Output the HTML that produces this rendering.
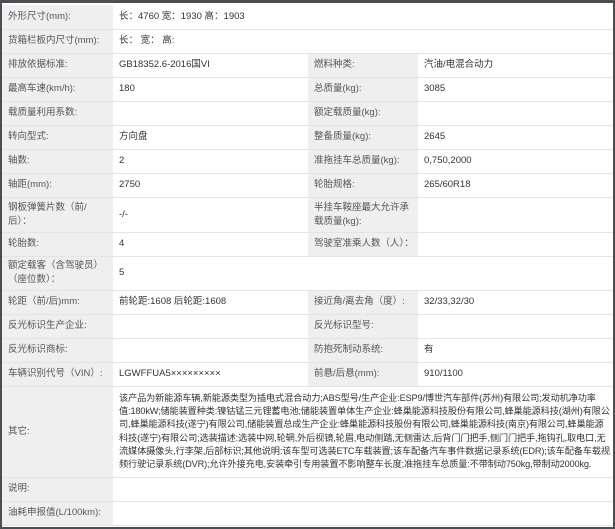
<!DOCTYPE html>
<html><head><meta charset="utf-8"><style>
html,body{margin:0;padding:0;background:#fff;}
body{width:615px;height:528px;overflow:hidden;position:relative;font-family:"Liberation Sans","Noto Sans CJK SC",sans-serif;font-size:9.5px;color:#444;}
.frame{position:absolute;left:0;top:0;width:611px;height:524px;border:2px solid #4a4f55;border-top:3px solid #4a4f55;box-sizing:content-box;}
table{border-collapse:collapse;table-layout:fixed;width:611px;position:absolute;left:0;top:2px;}
td{border-bottom:1px solid #e4e4e4;padding:0 0 0 6px;vertical-align:middle;line-height:14px;overflow:hidden;}
td.l{background:#efefef;color:#555;}
td.v{background:#fff;color:#333;}
</style></head><body>
<div class="frame">
<table>
<colgroup><col style="width:111px"><col style="width:195px"><col style="width:110px"><col style="width:195px"></colgroup>
<tr style="height:24px"><td class="l">外形尺寸(mm):</td><td class="v" colspan="3">长：4760 宽：1930 高：1903</td></tr>
<tr style="height:24px"><td class="l">货箱栏板内尺寸(mm):</td><td class="v" colspan="3">长： 宽： 高:</td></tr>
<tr style="height:24px"><td class="l">排放依据标准:</td><td class="v">GB18352.6-2016国VI</td><td class="l">燃料种类:</td><td class="v">汽油/电混合动力</td></tr>
<tr style="height:24px"><td class="l">最高车速(km/h):</td><td class="v">180</td><td class="l">总质量(kg):</td><td class="v">3085</td></tr>
<tr style="height:24px"><td class="l">载质量利用系数:</td><td class="v"></td><td class="l">额定载质量(kg):</td><td class="v"></td></tr>
<tr style="height:24px"><td class="l">转向型式:</td><td class="v">方向盘</td><td class="l">整备质量(kg):</td><td class="v">2645</td></tr>
<tr style="height:24px"><td class="l">轴数:</td><td class="v">2</td><td class="l">准拖挂车总质量(kg):</td><td class="v">0,750,2000</td></tr>
<tr style="height:24px"><td class="l">轴距(mm):</td><td class="v">2750</td><td class="l">轮胎规格:</td><td class="v">265/60R18</td></tr>
<tr style="height:35px"><td class="l">钢板弹簧片数（前/<br>后）：</td><td class="v">-/-</td><td class="l">半挂车鞍座最大允许承载质量(kg):</td><td class="v"></td></tr>
<tr style="height:24px"><td class="l">轮胎数:</td><td class="v">4</td><td class="l">驾驶室准乘人数（人）：</td><td class="v"></td></tr>
<tr style="height:34px"><td class="l">额定载客（含驾驶员）<br>（座位数）：</td><td class="v" colspan="3">5</td></tr>
<tr style="height:24px"><td class="l">轮距（前/后)mm:</td><td class="v">前轮距:1608 后轮距:1608</td><td class="l">接近角/离去角（度）:</td><td class="v">32/33,32/30</td></tr>
<tr style="height:24px"><td class="l">反光标识生产企业:</td><td class="v"></td><td class="l">反光标识型号:</td><td class="v"></td></tr>
<tr style="height:24px"><td class="l">反光标识商标:</td><td class="v"></td><td class="l">防抱死制动系统:</td><td class="v">有</td></tr>
<tr style="height:24px"><td class="l">车辆识别代号（VIN）:</td><td class="v">LGWFFUA5×××××××××</td><td class="l">前悬/后悬(mm):</td><td class="v">910/1100</td></tr>
<tr style="height:91px"><td class="l">其它:</td><td class="v" colspan="3" style="line-height:13.3px;padding-right:2px;font-size:9.2px;letter-spacing:-0.15px;">该产品为新能源车辆,新能源类型为插电式混合动力;ABS型号/生产企业:ESP9/博世汽车部件(苏州)有限公司;发动机净功率值:180kW;储能装置种类:镍钴锰三元锂蓄电池;储能装置单体生产企业:蜂巢能源科技股份有限公司,蜂巢能源科技(湖州)有限公司,蜂巢能源科技(遂宁)有限公司,储能装置总成生产企业:蜂巢能源科技股份有限公司,蜂巢能源科技(南京)有限公司,蜂巢能源科技(遂宁)有限公司;选装描述:选装中网,轮辋,外后视镜,轮眉,电动侧踏,无侧雷达,后背门门把手,侧门门把手,拖钩孔,取电口,无流媒体摄像头,行李架,后部标识;其他说明:该车型可选装ETC车载装置;该车配备汽车事件数据记录系统(EDR);该车配备车载视频行驶记录系统(DVR);允许外接充电,安装牵引专用装置不影响整车长度;准拖挂车总质量:不带制动750kg,带制动2000kg.</td></tr>
<tr style="height:24px"><td class="l">说明:</td><td class="v" colspan="3"></td></tr>
<tr style="height:24px"><td class="l">油耗申报值(L/100km):</td><td class="v" colspan="3"></td></tr>
</table>
</div>
</body></html>
